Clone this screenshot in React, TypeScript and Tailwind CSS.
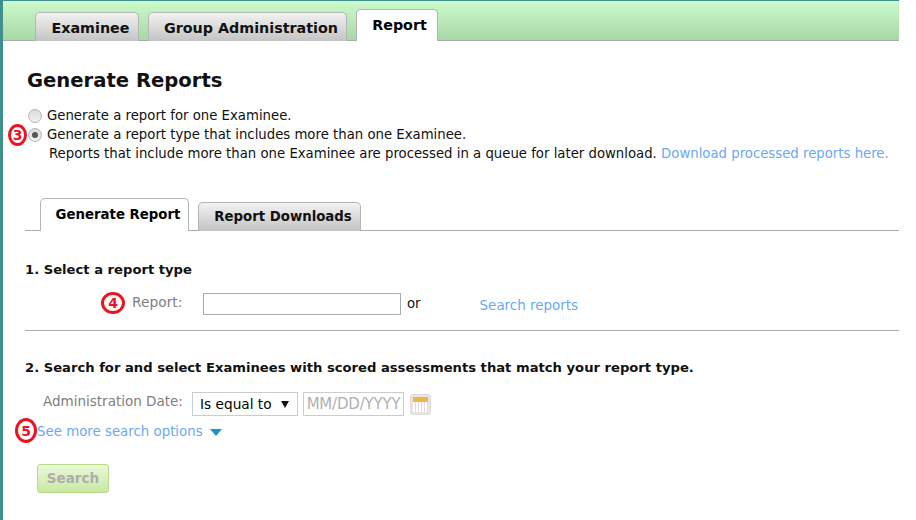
const font = "font-['DejaVu_Sans',Verdana,sans-serif]";

function Marker({ n, className }: { n: string; className: string }) {
  return (
    <span className={"absolute flex items-center justify-center rounded-[50%] border-[3px] border-[#ee1122] bg-white text-[14px] font-bold leading-none text-[#ee1122] " + className}>
      {n}
    </span>
  );
}

function Radio({ checked }: { checked?: boolean }) {
  return (
    <span className="flex h-[14px] w-[14px] shrink-0 items-center justify-center rounded-full border border-[#b4b4b4] bg-gradient-to-b from-[#dcdcdc] to-[#f0f0f0]">
      {checked && <span className="h-[6px] w-[6px] rounded-full bg-[#555]" />}
    </span>
  );
}

function Tab({ label, active, w, sub }: { label: string; active?: boolean; w: string; sub?: boolean }) {
  const size = sub ? "text-[13.3px] " : "text-[14.3px] ";
  if (active) {
    return (
      <div className={"relative z-10 -mb-px flex items-start justify-center rounded-t-[5px] border border-b-0 border-[#b5b5b5] bg-white leading-[18px] font-bold text-black " + size + (sub ? "h-[33px] pl-[7px] pt-[7px] " : "h-[32px] pl-[5px] pt-[6px] ") + w}>
        {label}
      </div>
    );
  }
  return (
    <div className={"-mb-px flex h-[29px] items-start justify-center rounded-t-[5px] border border-b-0 border-[#b5b5b5] bg-gradient-to-b from-[#f2f2f2] to-[#c4c4c4] pl-[7px] leading-[18px] font-bold text-[#111] " + size + (sub ? "pt-[5px] " : "pt-[6px] ") + w}>
      {label}
    </div>
  );
}

export default function App() {
  return (
    <div className={"relative h-[520px] w-[916px] overflow-hidden bg-white text-[13.28px] text-[#111] " + font}>
      <div className="h-full w-[899px] border-l-[3px] border-t border-[#3f8f8f]">
        <div className="flex h-[40px] items-end gap-[9px] border-b border-[#aaa] bg-gradient-to-b from-[#ccfacb] to-[#a9d8a7] pl-[32px]">
          <Tab label="Examinee" w="w-[104px]" />
          <Tab label="Group Administration" w="w-[199px]" />
          <Tab label="Report" active w="w-[82px]" />
        </div>

        <h1 className="ml-[24px] mt-[27px] text-[19.6px] font-bold leading-[26px] text-[#111]">Generate Reports</h1>

        <div className="ml-[25px] mt-[12px] leading-[19px]">
          <div className="flex items-center gap-[5px]"><Radio /><span>Generate a report for one Examinee.</span></div>
          <div className="flex items-center gap-[5px]"><Radio checked /><span>Generate a report type that includes more than one Examinee.</span></div>
          <div className="ml-[21px] whitespace-nowrap">
            Reports that include more than one Examinee are processed in a queue for later download.{" "}
            <span className="text-[#6aa9f4]">Download processed reports here.</span>
          </div>
        </div>

        <div className="ml-[22px] mt-[36px] flex h-[32px] items-end gap-[9px] border-b border-[#aaa] pl-[15px]">
          <Tab label="Generate Report" active sub w="w-[149px]" />
          <Tab label="Report Downloads" sub w="w-[163px]" />
        </div>

        <h2 className="ml-[22px] mt-[30px] text-[13.15px] font-bold leading-[18px]">1. Select a report type</h2>

        <div className="ml-[129px] mt-[14px] flex h-[22px] items-center">
          <span className="-mt-[3px] w-[71px] text-[13.8px] text-[#808080]">Report:</span>
          <span className="h-[22px] w-[198px] border border-[#aaa] bg-white" />
          <span className="ml-[6px]">or</span>
          <span className="ml-[59px] mt-[4px] text-[13.45px] text-[#6aa9f4]">Search reports</span>
        </div>

        <div className="ml-[22px] mt-[15px] h-px bg-[#aaa]" />

        <h2 className="ml-[22px] mt-[28px] whitespace-nowrap text-[13.15px] font-bold leading-[18px]">2. Search for and select Examinees with scored assessments that match your report type.</h2>

        <div className="ml-[40px] mt-[15px] flex h-[24px] items-center">
          <span className="-mt-[5px] w-[149px] text-[13.5px] text-[#808080]">Administration Date:</span>
          <span className="flex h-[24px] w-[106px] items-center justify-between border border-[#ccc] pl-[7px] pr-[8px] text-[13.7px] text-black">
            Is equal to
            <svg width="8" height="7" viewBox="0 0 9 8"><path d="M0 0h9L4.5 8z" fill="#111" /></svg>
          </span>
          <span className="ml-[5px] flex h-[24px] w-[101px] items-center justify-center border border-[#ccc] text-[15px] tracking-[-0.2px] text-[#b0b0b0]">MM/DD/YYYY</span>
          <span className="ml-[6px] flex h-[21px] w-[21px] flex-col rounded-[3px] border border-[#ddd] bg-[#e9e6e0] p-[2px]">
            <span className="h-[5px] bg-[#f0b54a]" />
            <span className="flex-1 bg-[repeating-linear-gradient(90deg,#fff_0_2px,#ddd_2px_3px)]" />
          </span>
        </div>

        <div className="ml-[34px] mt-[5px] flex h-[20px] items-center pt-[2px] text-[13.35px] text-[#6aa9f4]">
          See more search options
          <svg className="ml-[7px]" width="12" height="7" viewBox="0 0 12 7"><path d="M0 0h12L6 7z" fill="#1a96cf" /></svg>
        </div>

        <div className="ml-[34px] mt-[23px] flex h-[29px] w-[72px] items-center justify-center rounded-[3px] border border-[#b5dd85] bg-gradient-to-b from-[#eaf7d8] to-[#c9e9a3] text-[13.5px] font-bold text-[#adadad]">
          Search
        </div>
      </div>

      <Marker n="3" className="left-[8px] top-[124px] h-[22px] w-[19px]" />
      <Marker n="4" className="left-[101px] top-[292px] h-[22px] w-[24px]" />
      <Marker n="5" className="left-[15px] top-[418px] h-[25px] w-[22px]" />
    </div>
  );
}
